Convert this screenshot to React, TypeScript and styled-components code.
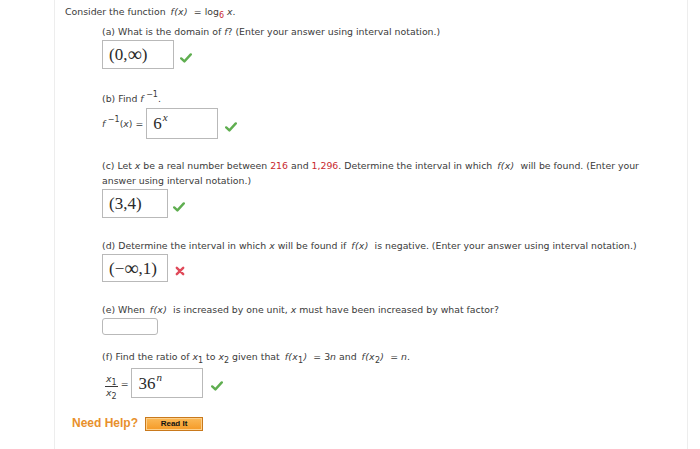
import styled, { createGlobalStyle } from "styled-components";

const GlobalStyle = createGlobalStyle`
  body {
    margin: 0;
    background: #ffffff;
  }
`;

const Panel = styled.div`
  margin-left: 54px;
  width: 634px;
  height: 449px;
  box-sizing: border-box;
  border-left: 1px solid #ededed;
  border-right: 1px solid #ededed;
  padding: 4px 0 0 10px;
  font-family: "DejaVu Sans", Verdana, sans-serif;
  font-size: 9.35px;
  line-height: 15px;
  color: #3a3a3a;
`;

const Intro = styled.div``;

const Part = styled.div<{ $top: number }>`
  margin-top: ${({ $top }) => $top}px;
  margin-left: 37px;
  width: 560px;
`;

const Question = styled.div``;

const Var = styled.i`
  font-style: italic;
`;

const Func = styled.span`
  font-style: italic;
  margin: 0 3px 0 2px;
  letter-spacing: 0.3px;
`;

const Red = styled.span`
  color: #c8282e;
`;

const Sub = styled.sub`
  font-size: 8px;
  line-height: 0;
  vertical-align: -3px;
  font-style: normal;
`;

const Sup = styled.sup`
  font-size: 8px;
  line-height: 0;
  vertical-align: 5px;
`;

const AnswerRow = styled.div<{ $top: number }>`
  display: flex;
  align-items: center;
  margin-top: ${({ $top }) => $top}px;
`;

const MathBox = styled.div<{ $w: number; $h: number }>`
  box-sizing: border-box;
  width: ${({ $w }) => $w}px;
  height: ${({ $h }) => $h}px;
  border: 1px solid #b9b9b9;
  display: flex;
  align-items: center;
  padding-left: 6px;
  font-family: "Liberation Serif", "DejaVu Serif", serif;
  font-size: 17px;
  color: #2a2a2a;
`;

const MathText = styled.span`
  white-space: nowrap;
`;

const EmptyBox = styled.div`
  box-sizing: border-box;
  width: 56px;
  height: 17px;
  border: 1px solid #b9b9b9;
  border-radius: 3px;
`;

const MathSup = styled.sup`
  font-style: italic;
  font-size: 11px;
  line-height: 0;
  vertical-align: 8px;
  margin-left: 1px;
`;

const Inf = styled.span`
  font-size: 20px;
  line-height: 0;
  position: relative;
  top: 1px;
`;

const Mark = styled.span<{ $gap: number }>`
  display: inline-flex;
  margin-left: ${({ $gap }) => $gap}px;
  margin-top: 6px;
`;

const Label = styled.span`
  margin-right: 3px;
  white-space: nowrap;
`;

const Fraction = styled.span`
  display: inline-flex;
  flex-direction: column;
  align-items: center;
  font-style: italic;
  line-height: 12px;
  margin: 6px 3px 0 3px;
`;

const Numer = styled.span`
  border-bottom: 1px solid #3a3a3a;
  padding: 0 1px 1px;
`;

const Denom = styled.span``;

const HelpRow = styled.div`
  display: flex;
  align-items: center;
  margin-top: 17px;
  margin-left: 7px;
`;

const HelpText = styled.span`
  font-family: "Liberation Sans", Arial, sans-serif;
  font-weight: bold;
  font-size: 12px;
  color: #e8902c;
`;

const ReadButton = styled.span`
  box-sizing: border-box;
  width: 58px;
  height: 14px;
  margin-left: 7px;
  display: inline-flex;
  align-items: center;
  justify-content: center;
  background: linear-gradient(#fbb957, #f59a26);
  border: 1px solid #c9791c;
  box-shadow: inset 0 0 0 1px #fdd08a;
  font-family: "Liberation Sans", Arial, sans-serif;
  font-weight: bold;
  font-size: 8px;
  color: #111;
`;

const Check = () => (
  <svg width="12" height="10" viewBox="0 0 12 10">
    <path
      d="M1.2 5.4 L4.4 8.4 L10.8 1.4"
      fill="none"
      stroke="#5fae50"
      strokeWidth="2.4"
      strokeLinecap="round"
      strokeLinejoin="round"
    />
  </svg>
);

const Cross = () => (
  <svg width="10" height="10" viewBox="0 0 10 10">
    <path
      d="M1.8 1.8 L8.2 8.2 M8.2 1.8 L1.8 8.2"
      fill="none"
      stroke="#e04a5a"
      strokeWidth="2.4"
      strokeLinecap="round"
    />
  </svg>
);

const Fx = ({ sub }: { sub?: string }) => (
  <Func>
    f(x{sub && <Sub>{sub}</Sub>})
  </Func>
);

export default function App() {
  return (
    <>
      <GlobalStyle />
      <Panel>
        <Intro>
          Consider the function <Fx /> = log<Sub><Red>6</Red></Sub> <Var>x</Var>.
        </Intro>

        <Part $top={5}>
          <Question>
            (a) What is the domain of <Var>f</Var>? (Enter your answer using interval notation.)
          </Question>
          <AnswerRow $top={1}>
            <MathBox $w={72} $h={29}>
              <MathText>
                (0,<Inf>∞</Inf>)
              </MathText>
            </MathBox>
            <Mark $gap={6}>
              <Check />
            </Mark>
          </AnswerRow>
        </Part>

        <Part $top={22}>
          <Question>
            (b) Find <Var>f</Var>
            <Sup> −1</Sup>.
          </Question>
          <AnswerRow $top={2}>
            <Label>
              <Var>f</Var>
              <Sup> −1</Sup>(<Var>x</Var>) =
            </Label>
            <MathBox $w={72} $h={31}>
              <MathText>
                6<MathSup>x</MathSup>
              </MathText>
            </MathBox>
            <Mark $gap={7}>
              <Check />
            </Mark>
          </AnswerRow>
        </Part>

        <Part $top={19}>
          <Question>
            (c) Let <Var>x</Var> be a real number between <Red>216</Red> and <Red>1,296</Red>.
            Determine the interval in which <Fx /> will be found. (Enter your answer using
            interval notation.)
          </Question>
          <AnswerRow $top={1}>
            <MathBox $w={66} $h={29}>
              <MathText>(3,4)</MathText>
            </MathBox>
            <Mark $gap={5}>
              <Check />
            </Mark>
          </AnswerRow>
        </Part>

        <Part $top={20}>
          <Question>
            (d) Determine the interval in which <Var>x</Var> will be found if <Fx /> is
            negative. (Enter your answer using interval notation.)
          </Question>
          <AnswerRow $top={1}>
            <MathBox $w={66} $h={28}>
              <MathText>
                (−<Inf>∞</Inf>,1)
              </MathText>
            </MathBox>
            <Mark $gap={7}>
              <Cross />
            </Mark>
          </AnswerRow>
        </Part>

        <Part $top={20}>
          <Question>
            (e) When <Fx /> is increased by one unit, <Var>x</Var> must have been increased by
            what factor?
          </Question>
          <AnswerRow $top={1}>
            <EmptyBox />
          </AnswerRow>
        </Part>

        <Part $top={14}>
          <Question>
            (f) Find the ratio of <Var> x</Var>
            <Sub>1</Sub> to <Var> x</Var>
            <Sub>2</Sub> given that <Fx sub="1" /> = 3<Var>n</Var> and <Fx sub="2" /> ={" "}
            <Var>n</Var>.
          </Question>
          <AnswerRow $top={3}>
            <Fraction>
              <Numer>
                x<Sub>1</Sub>
              </Numer>
              <Denom>
                x<Sub>2</Sub>
              </Denom>
            </Fraction>
            <Label>=</Label>
            <MathBox $w={72} $h={30}>
              <MathText>
                36<MathSup>n</MathSup>
              </MathText>
            </MathBox>
            <Mark $gap={8}>
              <Check />
            </Mark>
          </AnswerRow>
        </Part>

        <HelpRow>
          <HelpText>Need Help?</HelpText>
          <ReadButton>Read It</ReadButton>
        </HelpRow>
      </Panel>
    </>
  );
}
